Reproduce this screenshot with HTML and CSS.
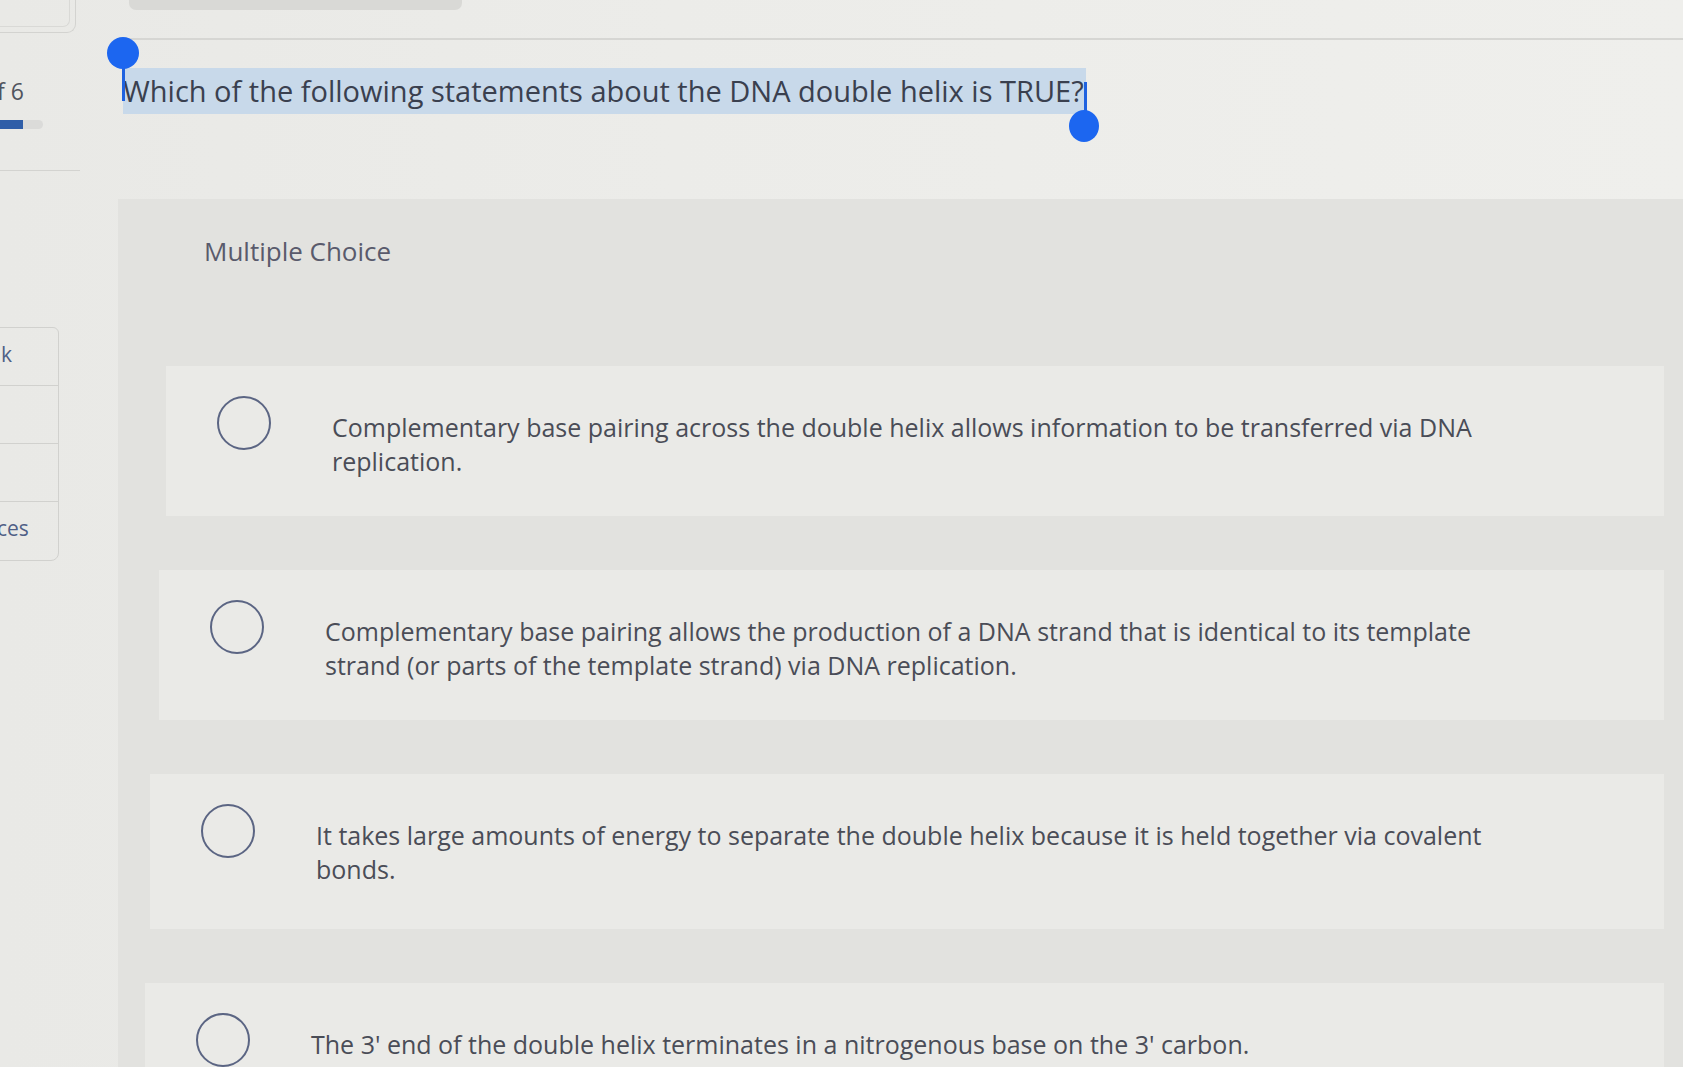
FILE: index.html
```html
<!DOCTYPE html>
<html lang="en">
<head>
<meta charset="utf-8">
<title>Multiple Choice</title>
<link rel="stylesheet" href="styles.css">
</head>
<body>
<div class="page">
  <aside class="sidebar">
    <div class="stub"><div class="stub-inner"></div></div>
    <div class="count">f 6</div>
    <div class="progress"><span class="fill"></span></div>
    <div class="divider"></div>
    <nav class="navbox">
      <div class="navrow">k</div>
      <div class="navrow"></div>
      <div class="navrow"></div>
      <div class="navrow navrow-last">ces</div>
    </nav>
  </aside>
  <main class="main">
    <div class="topbar"></div>
    <div class="rule"></div>
    <h1 class="question"><span class="sel">Which of the following statements about the DNA double helix is TRUE?<i class="handle handle-start"></i><i class="handle handle-end"></i></span></h1>
    <section class="panel">
      <div class="mc-label">Multiple Choice</div>
      <div class="option opt-1">
        <span class="radio"></span>
        <p class="opt-text">Complementary base pairing across the double helix allows information to be transferred via DNA replication.</p>
      </div>
      <div class="option opt-2">
        <span class="radio"></span>
        <p class="opt-text">Complementary base pairing allows the production of a DNA strand that is identical to its template strand (or parts of the template strand) via DNA replication.</p>
      </div>
      <div class="option opt-3">
        <span class="radio"></span>
        <p class="opt-text">It takes large amounts of energy to separate the double helix because it is held together via covalent bonds.</p>
      </div>
      <div class="option opt-4">
        <span class="radio"></span>
        <p class="opt-text">The 3' end of the double helix terminates in a nitrogenous base on the 3' carbon.</p>
      </div>
    </section>
  </main>
</div>
</body>
</html>
```

FILE: styles.css
```css
* { box-sizing: border-box; }

html, body {
  margin: 0;
  padding: 0;
}

body {
  width: 1683px;
  height: 1067px;
  overflow: hidden;
  background: linear-gradient(90deg, #e9e9e6 0%, #ecece9 40%, #efefec 100%);
  font-family: "Open Sans", "Lato", "Liberation Sans", sans-serif;
  color: #454852;
}

.page {
  display: flex;
  height: 1067px;
}

/* ---------- sidebar ---------- */
.sidebar {
  width: 118px;
  flex: none;
  display: flex;
  flex-direction: column;
  align-items: flex-start;
}

.stub {
  flex: none;
  width: 76px;
  height: 33px;
  border-right: 1.5px solid #d3d3d0;
  border-bottom: 1.5px solid #d3d3d0;
  border-bottom-right-radius: 9px;
  padding: 0 5px 5px 0;
}

.stub-inner {
  height: 100%;
  border-right: 1px solid #d9d9d6;
  border-bottom: 1px solid #d9d9d6;
  border-bottom-right-radius: 7px;
}

.count {
  flex: none;
  margin-top: 44px;
  font-size: 23px;
  line-height: 28px;
  color: #50545e;
  margin-left: -3px;
}

.progress {
  flex: none;
  margin-top: 15px;
  width: 43px;
  height: 9px;
  background: #dbdbd9;
  border-radius: 0 5px 5px 0;
  overflow: hidden;
}

.progress .fill {
  display: block;
  width: 23px;
  height: 100%;
  background: #2f5ea8;
}

.divider {
  flex: none;
  margin-top: 41px;
  width: 80px;
  height: 1px;
  background: #d3d3d0;
}

.navbox {
  flex: none;
  margin-top: 156px;
  margin-left: -10px;
  width: 69px;
  border: 1.5px solid #d1d1ce;
  border-radius: 0 6px 8px 0;
  display: flex;
  flex-direction: column;
}

.navrow {
  height: 58px;
  border-bottom: 1.5px solid #d1d1ce;
  padding-left: 10px;
  font-size: 21px;
  line-height: 52px;
  color: #4f5f86;
}

.navrow-last {
  border-bottom: none;
  padding-left: 6px;
}

/* ---------- main ---------- */
.main {
  flex: 1;
  display: flex;
  flex-direction: column;
  min-width: 0;
}

.topbar {
  flex: none;
  margin-left: 11px;
  width: 333px;
  height: 10px;
  background: #d9d9d6;
  border-radius: 0 0 7px 7px;
}

.rule {
  flex: none;
  margin-top: 28px;
  margin-left: 11px;
  height: 2px;
  background: #d6d6d3;
}

.question {
  flex: none;
  margin: 28px 0 0 5px;
  font-size: 29px;
  font-weight: 400;
  line-height: 46px;
  color: #3a404f;
}

.sel {
  position: relative;
  display: inline-block;
  background: #c8d9ea;
  padding-right: 2px;
  vertical-align: top;
}

.handle {
  position: absolute;
  width: 3px;
  background: #1f62e0;
}

.handle::after {
  content: "";
  position: absolute;
  width: 32px;
  height: 32px;
  border-radius: 50%;
  background: #1c66f0;
  left: -15px;
}

.handle-start {
  left: -1px;
  top: -17px;
  height: 50px;
}

.handle-start::after {
  top: -14px;
}

.handle-end {
  right: -1px;
  top: 14px;
  height: 40px;
}

.handle-end::after {
  bottom: -20px;
  width: 30px;
}

.panel {
  margin-top: 85px;
  flex: 1;
  background: #e2e2df;
  padding: 37px 19px 0 48px;
  display: flex;
  flex-direction: column;
}

.mc-label {
  flex: none;
  margin-left: 38px;
  font-size: 26px;
  line-height: 30px;
  color: #595a6c;
}

.option {
  flex: none;
  margin-top: 54px;
  height: 150px;
  background: #eaeae7;
  display: flex;
  align-items: flex-start;
  padding: 30px 0 0 51px;
}

.opt-1 { margin-top: 100px; }
.opt-2 { margin-left: -7px; }
.opt-3 { margin-left: -16px; height: 155px; }
.opt-4 { margin-left: -21px; }

.radio {
  flex: none;
  width: 54px;
  height: 54px;
  border: 2.5px solid #5b6583;
  border-radius: 50%;
}

.opt-text {
  margin: 14px 0 0 61px;
  max-width: 1215px;
  font-size: 25px;
  line-height: 34px;
  color: #4a4d57;
}
```
